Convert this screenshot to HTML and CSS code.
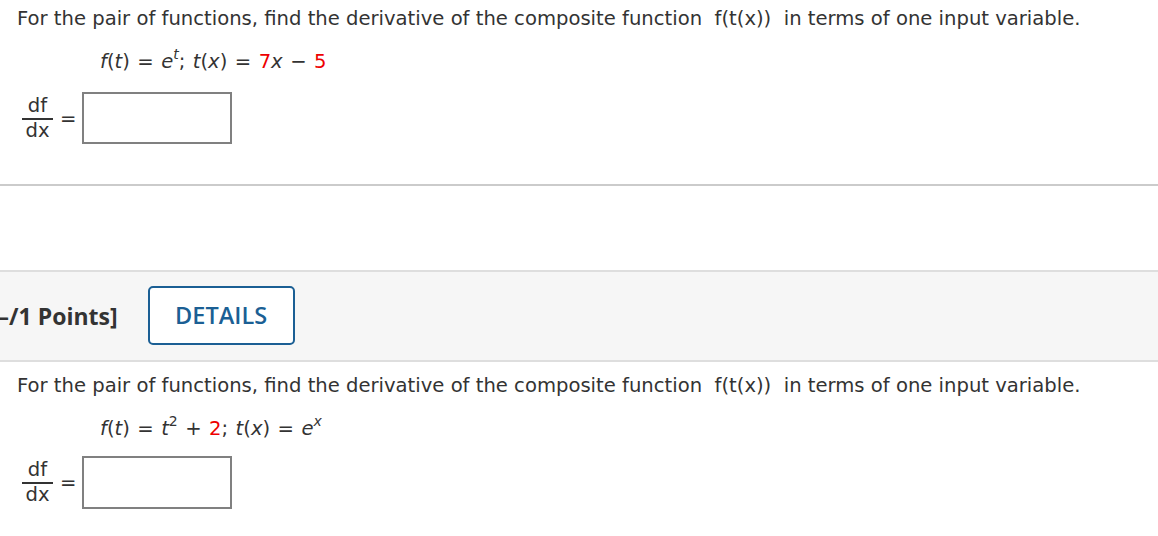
FILE: index.html
```html
<!DOCTYPE html>
<html>
<head>
<meta charset="utf-8">
<link rel="stylesheet" href="styles.css">
</head>
<body>
<section class="question q1">
  <p class="prompt">For the pair of functions, find the derivative of the composite function&nbsp; f(t(x))&nbsp; in terms of one input variable.</p>
  <p class="formula"><i>f</i>(<i>t</i>) = <i>e</i><sup><i>t</i></sup>; <i>t</i>(<i>x</i>) = <span class="num">7</span><i>x</i> − <span class="num">5</span></p>
  <div class="answer">
    <div class="frac"><span class="top">df</span><span class="bot">dx</span></div>
    <span class="eq">=</span>
    <div class="box"></div>
  </div>
</section>
<hr class="sep">
<div class="band">
  <span class="points">[–/1 Points]</span>
  <button class="details">DETAILS</button>
</div>
<section class="question q2">
  <p class="prompt">For the pair of functions, find the derivative of the composite function&nbsp; f(t(x))&nbsp; in terms of one input variable.</p>
  <p class="formula"><i>f</i>(<i>t</i>) = <i>t</i><sup>2</sup> + <span class="num">2</span>; <i>t</i>(<i>x</i>) = <i>e</i><sup><i>x</i></sup></p>
  <div class="answer">
    <div class="frac"><span class="top">df</span><span class="bot">dx</span></div>
    <span class="eq">=</span>
    <div class="box"></div>
  </div>
</section>
</body>
</html>
```
FILE: styles.css
```css
html, body {
  margin: 0;
  padding: 0;
  background: #fff;
}
body {
  font-family: "DejaVu Sans", Verdana, sans-serif;
  font-size: 19.6px;
  color: #333;
  overflow: hidden;
}
.question {
  padding-left: 17px;
}
.q1 {
  padding-top: 7px;
}
.prompt {
  margin: 0;
  line-height: 24px;
  white-space: nowrap;
}
.formula {
  margin: 19px 0 0 83px;
  line-height: 24px;
  word-spacing: 1.2px;
}
.formula i {
  font-style: oblique;
}
.formula sup {
  font-size: 14px;
  line-height: 0;
  vertical-align: 9px;
}
.num {
  color: #e00;
}
.answer {
  display: flex;
  align-items: center;
  margin-top: 18px;
}
.frac {
  display: flex;
  flex-direction: column;
  align-items: center;
  width: 31px;
  margin-left: 5px;
  line-height: 22px;
}
.frac .top {
  border-bottom: 2px solid #333;
  width: 100%;
  text-align: center;
  padding-bottom: 1px;
}
.frac .bot {
  padding-top: 0;
}
.eq {
  margin-left: 7px;
  margin-right: 6px;
}
.box {
  width: 146px;
  height: 48px;
  border: 2px solid #808080;
}
.sep {
  margin: 40px 0 0;
  border: 0;
  height: 2px;
  background: #cbcbcb;
}
.band {
  margin-top: 84px;
  border-top: 2px solid #dedede;
  border-bottom: 2px solid #dedede;
  background: #f6f6f6;
  height: 88px;
  display: flex;
  align-items: center;
  font-family: "Open Sans", sans-serif;
}
.points {
  margin-left: -10px;
  font-weight: 700;
  font-size: 23px;
  color: #333;
}
.details {
  margin-left: 30px;
  margin-top: -2px;
  width: 147px;
  height: 59px;
  border: 2px solid #1b5f94;
  border-radius: 5px;
  background: #fff;
  color: #1b5f94;
  font-family: "Open Sans", sans-serif;
  font-weight: 600;
  font-size: 23.5px;
  padding: 0;
}
.q2 {
  padding-top: 12px;
}
.q2 .answer {
  margin-top: 15px;
}
.q2 .box {
  height: 49px;
}
```
